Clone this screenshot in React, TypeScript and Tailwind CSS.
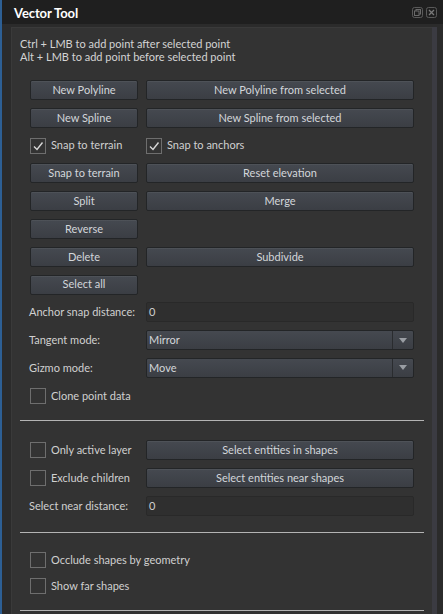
import React from "react";

const font = { fontFamily: '"Lato", "Liberation Sans", sans-serif' };

function Btn({ children, className = "" }: { children: React.ReactNode; className?: string }) {
  return (
    <div
      className={
        "h-[20px] flex items-center justify-center whitespace-nowrap rounded-[2px] border border-[#232527] bg-gradient-to-b from-[#454950] to-[#3b3e44] text-[#d3d6da] text-[11px] shadow-[inset_0_1px_0_rgba(255,255,255,0.05)] " +
        className
      }
    >
      {children}
    </div>
  );
}

function Check({ checked, label }: { checked?: boolean; label: string }) {
  return (
    <div className="flex items-center h-[20px] gap-[5px] text-[#d0d0d0] text-[11px] whitespace-nowrap">
      <div className="w-[16px] h-[16px] shrink-0 border border-[#6e6e6e] flex items-center justify-center">
        {checked && (
          <svg width="12" height="12" viewBox="0 0 12 12">
            <path d="M2 6.5 L5 9.5 L10.5 2.5" stroke="#d8d8d8" strokeWidth="1.4" fill="none" />
          </svg>
        )}
      </div>
      <span>{label}</span>
    </div>
  );
}

function Input({ value }: { value: string }) {
  return (
    <div className="h-[20px] flex items-center px-[2px] rounded-[2px] border border-[#292929] bg-[#2f2f2f] text-[#d0d0d0] text-[11px]">
      {value}
    </div>
  );
}

function Select({ value }: { value: string }) {
  return (
    <div className="h-[20px] flex items-stretch rounded-[2px] border border-[#232527] bg-gradient-to-b from-[#454950] to-[#3b3e44] text-[#d3d6da] text-[11px]">
      <div className="flex-1 flex items-center px-[2px]">{value}</div>
      <div className="w-[21px] border-l border-[#2a2c2f] flex items-center justify-center">
        <svg width="8" height="5" viewBox="0 0 8 5">
          <path d="M0 0 H8 L4 5 Z" fill="#9a9ea4" />
        </svg>
      </div>
    </div>
  );
}

function Label({ children }: { children: React.ReactNode }) {
  return <div className="h-[20px] flex items-center whitespace-nowrap text-[#d0d0d0] text-[11px] -ml-[1px]">{children}</div>;
}

export default function App() {
  return (
    <div className="w-[443px] h-[614px] overflow-hidden flex bg-[#2b2b2b]" style={font}>
      <div className="w-[2px] h-full bg-[#2d5f94]" />
      <div className="flex-1 flex flex-col">
        <div className="h-[24px] shrink-0 bg-[#1f1f1f] flex items-center pl-[12px] pr-[6px] pt-[3px]">
          <span className="text-white font-bold text-[13px] tracking-[-0.1px]">Vector Tool</span>
          <div className="ml-auto flex gap-[3px] -mt-[2px]">
            <svg width="11" height="11" viewBox="0 0 11 11">
              <rect x="0.5" y="0.5" width="10" height="10" rx="2" fill="none" stroke="#5a5a5a" />
              <rect x="4" y="2.5" width="4.5" height="4.5" fill="none" stroke="#6a6a6a" />
              <rect x="2.5" y="4" width="4.5" height="4.5" fill="#1f1f1f" stroke="#6a6a6a" />
            </svg>
            <svg width="11" height="11" viewBox="0 0 11 11">
              <rect x="0.5" y="0.5" width="10" height="10" rx="2" fill="none" stroke="#5a5a5a" />
              <path d="M3 3 L8 8 M8 3 L3 8" stroke="#7a7a7a" strokeWidth="1.3" />
            </svg>
          </div>
        </div>
        <div className="flex-1 flex pt-[3px] pl-[9px]">
          <div className="w-[421px] h-full bg-[#333333] border-l border-t border-[#3a3a3a] pl-[8px] pt-[9px]">
            <div className="text-[#d4d4d4] text-[11px] leading-[13px]">
              <div>Ctrl + LMB to add point after selected point</div>
              <div>Alt + LMB to add point before selected point</div>
            </div>
            <div className="ml-[10px] mt-[17px] grid grid-cols-[108px_268px] gap-x-[8px] gap-y-[7.8px]">
              <Btn>New Polyline</Btn>
              <Btn>New Polyline from selected</Btn>
              <Btn>New Spline</Btn>
              <Btn>New Spline from selected</Btn>
              <Check checked label="Snap to terrain" />
              <Check checked label="Snap to anchors" />
              <Btn>Snap to terrain</Btn>
              <Btn>Reset elevation</Btn>
              <Btn>Split</Btn>
              <Btn>Merge</Btn>
              <Btn>Reverse</Btn>
              <div />
              <Btn>Delete</Btn>
              <Btn>Subdivide</Btn>
              <Btn>Select all</Btn>
              <div />
              <Label>Anchor snap distance:</Label>
              <Input value="0" />
              <Label>Tangent mode:</Label>
              <Select value="Mirror" />
              <Label>Gizmo mode:</Label>
              <Select value="Move" />
              <Check label="Clone point data" />
            </div>
            <div className="mt-[14px] mr-[8px] h-px bg-[#b4b4b4]" />
            <div className="ml-[10px] mt-[19px] grid grid-cols-[108px_268px] gap-x-[8px] gap-y-[8px]">
              <Check label="Only active layer" />
              <Btn>Select entities in shapes</Btn>
              <Check label="Exclude children" />
              <Btn>Select entities near shapes</Btn>
              <Label>Select near distance:</Label>
              <Input value="0" />
            </div>
            <div className="mt-[16px] mr-[8px] h-px bg-[#b4b4b4]" />
            <div className="ml-[10px] mt-[17px] flex flex-col gap-[6px]">
              <Check label="Occlude shapes by geometry" />
              <Check label="Show far shapes" />
            </div>
            <div className="mt-[14px] mr-[8px] h-px bg-[#b4b4b4]" />
          </div>
          <div className="w-[5px] h-full bg-[#3b3b42]" />
        </div>
      </div>
    </div>
  );
}
